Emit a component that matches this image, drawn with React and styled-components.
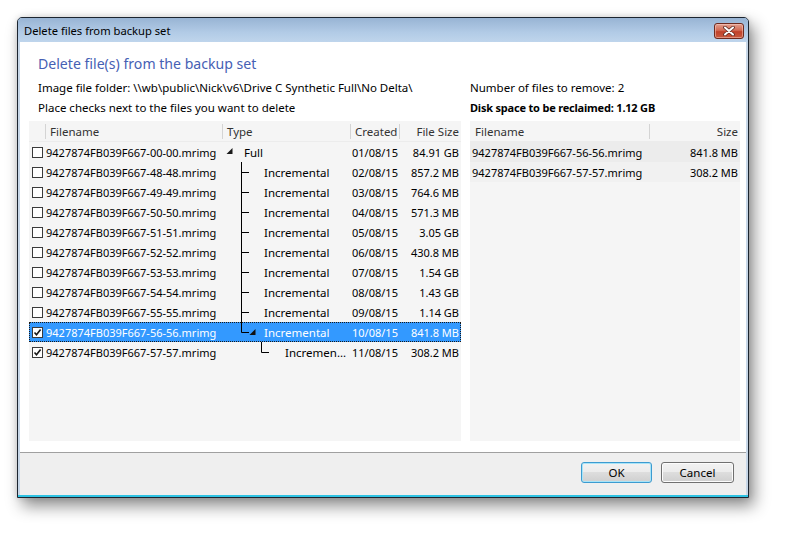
import React from "react";
import styled, { createGlobalStyle } from "styled-components";

const files = [
  { name: "9427874FB039F667-00-00.mrimg", type: "Full", created: "01/08/15", size: "84.91 GB", tree: "root" },
  { name: "9427874FB039F667-48-48.mrimg", type: "Incremental", created: "02/08/15", size: "857.2 MB", tree: "child" },
  { name: "9427874FB039F667-49-49.mrimg", type: "Incremental", created: "03/08/15", size: "764.6 MB", tree: "child" },
  { name: "9427874FB039F667-50-50.mrimg", type: "Incremental", created: "04/08/15", size: "571.3 MB", tree: "child" },
  { name: "9427874FB039F667-51-51.mrimg", type: "Incremental", created: "05/08/15", size: "3.05 GB", tree: "child" },
  { name: "9427874FB039F667-52-52.mrimg", type: "Incremental", created: "06/08/15", size: "430.8 MB", tree: "child" },
  { name: "9427874FB039F667-53-53.mrimg", type: "Incremental", created: "07/08/15", size: "1.54 GB", tree: "child" },
  { name: "9427874FB039F667-54-54.mrimg", type: "Incremental", created: "08/08/15", size: "1.43 GB", tree: "child" },
  { name: "9427874FB039F667-55-55.mrimg", type: "Incremental", created: "09/08/15", size: "1.14 GB", tree: "child" },
  { name: "9427874FB039F667-56-56.mrimg", type: "Incremental", created: "10/08/15", size: "841.8 MB", tree: "lastOpen", checked: true, selected: true },
  { name: "9427874FB039F667-57-57.mrimg", type: "Incremen...", created: "11/08/15", size: "308.2 MB", tree: "grand", checked: true },
];

const removed = [
  { name: "9427874FB039F667-56-56.mrimg", size: "841.8 MB" },
  { name: "9427874FB039F667-57-57.mrimg", size: "308.2 MB" },
];

const GlobalStyle = createGlobalStyle`
  html, body {
    margin: 0;
    padding: 0;
    background: #ffffff;
  }
  body {
    font-family: "Noto Sans", "Open Sans", sans-serif;
    font-size: 11.5px;
    color: #000;
  }
`;

const TreeGlyph = ({ tree }) => {
  const widths = { root: 22, child: 42, lastOpen: 42, grand: 63 };
  return (
    <svg width={widths[tree]} height="20" style={{ flexShrink: 0 }}>
      {tree === "root" && <polygon points="10.5,6 10.5,12 4.5,12" fill="#1a1a1a" />}
      {tree === "child" && (
        <path d="M19.5 0 V20 M19.5 10.5 H27" stroke="#000" strokeWidth="1" fill="none" />
      )}
      {tree === "lastOpen" && (
        <>
          <path d="M19.5 0 V10.5 H27" stroke="#000" strokeWidth="1" fill="none" />
          <polygon points="33.5,7 33.5,13 27.5,13" fill="#111" />
        </>
      )}
      {tree === "grand" && <path d="M39.5 0 V10.5 H47" stroke="#000" strokeWidth="1" fill="none" />}
    </svg>
  );
};

const CheckBox = ({ checked }) => (
  <Box>
    {checked && (
      <svg width="9" height="9" viewBox="0 0 9 9">
        <path d="M1.5 4.5 L3.5 6.8 L7.6 1.6" stroke="#1a1a1a" strokeWidth="1.6" fill="none" />
      </svg>
    )}
  </Box>
);

const App = () => {
  return (
    <Page>
      <GlobalStyle />
      <Window>
        <TitleBar>
          <TitleText>Delete files from backup set</TitleText>
          <CloseButton>
            <svg width="14" height="10" viewBox="0 0 14 10">
              <path d="M3 1.5 L11 8.5 M11 1.5 L3 8.5" stroke="#5a2a22" strokeWidth="3.6" strokeLinecap="round" />
              <path d="M3 1.5 L11 8.5 M11 1.5 L3 8.5" stroke="#ffffff" strokeWidth="2" strokeLinecap="round" />
            </svg>
          </CloseButton>
        </TitleBar>
        <Client>
          <Main>
            <Heading>Delete file(s) from the backup set</Heading>
            <InfoLine $indent>Image file folder: \\wb\public\Nick\v6\Drive C Synthetic Full\No Delta\</InfoLine>
            <InfoLine>Number of files to remove: 2</InfoLine>
            <InfoLine $indent>Place checks next to the files you want to delete</InfoLine>
            <InfoLine $bold>Disk space to be reclaimed: 1.12 GB</InfoLine>

            <ListPanel>
              <HeaderRow $cols="16px 177px 128px 49px 62px">
                <HeadCell />
                <HeadCell $sep>Filename</HeadCell>
                <HeadCell $sep>Type</HeadCell>
                <HeadCell $sep>Created</HeadCell>
                <HeadCell $sep $right>File Size</HeadCell>
              </HeaderRow>
              {files.map((f) => (
                <FileRow key={f.name} $selected={f.selected}>
                  <NameCell>
                    <CheckBox checked={f.checked} />
                    <span>{f.name}</span>
                  </NameCell>
                  <TypeCell>
                    <TreeGlyph tree={f.tree} />
                    <span>{f.type}</span>
                  </TypeCell>
                  <Cell $pad="0 0 0 2px">{f.created}</Cell>
                  <Cell $right $pad="0 2px 0 0">{f.size}</Cell>
                </FileRow>
              ))}
            </ListPanel>

            <ListPanel>
              <HeaderRow $cols="179px 91px">
                <HeadCell $pad="0 0 0 5px">Filename</HeadCell>
                <HeadCell $sep $right>Size</HeadCell>
              </HeaderRow>
              {removed.map((r, i) => (
                <RemovedRow key={r.name} $shade={i === 0 ? "#ececec" : "#f1f1f1"}>
                  <Cell $pad="0 0 0 2px">{r.name}</Cell>
                  <Cell $right $pad="0 2px 0 0">{r.size}</Cell>
                </RemovedRow>
              ))}
            </ListPanel>
          </Main>
          <Footer>
            <Button $default>OK</Button>
            <Button>Cancel</Button>
          </Footer>
        </Client>
      </Window>
    </Page>
  );
};

export default App;

const Page = styled.div`
  padding: 17px 0 0 17px;
  width: 797px;
  height: 546px;
  box-sizing: border-box;
  background: #ffffff;
`;

const Window = styled.div`
  width: 732px;
  height: 481px;
  box-sizing: border-box;
  border: 1px solid #1c2530;
  border-radius: 5px 5px 0 0;
  background: #c7d7e8;
  padding: 0 2px 2px 2px;
  display: flex;
  flex-direction: column;
  box-shadow: 5px 8px 16px rgba(0, 0, 0, 0.45), 0 0 6px rgba(0, 0, 0, 0.12),
    inset 0 -2px 0 #2ec3e3;
`;

const TitleBar = styled.div`
  height: 24px;
  margin: 0 -2px;
  padding: 0 4px 0 6px;
  display: flex;
  align-items: center;
  justify-content: space-between;
  border-radius: 4px 4px 0 0;
  background: linear-gradient(#98b4d4, #b2cbe6 60%, #bfd5ec);
`;

const TitleText = styled.div`
  font-size: 11.2px;
  color: #000;
  padding-top: 1px;
`;

const CloseButton = styled.div`
  width: 30px;
  height: 16px;
  box-sizing: border-box;
  margin-top: 2px;
  border: 1px solid #6e2a1f;
  border-radius: 3px;
  display: flex;
  align-items: center;
  justify-content: center;
  background: linear-gradient(#e3a090, #d36a53 45%, #c0412a 55%, #c95a3f);
  box-shadow: inset 0 0 0 1px rgba(255, 220, 210, 0.45);
`;

const Client = styled.div`
  flex: 1;
  background: #ffffff;
  display: flex;
  flex-direction: column;
`;

const Main = styled.div`
  flex: 1;
  padding: 12px 5px 0 9px;
  display: grid;
  grid-template-columns: 432px 270px;
  grid-template-rows: 24px 20px 20px 323px;
  column-gap: 9px;
  align-content: start;
`;

const Heading = styled.div`
  grid-column: 1 / span 2;
  padding-left: 9px;
  font-size: 14.1px;
  line-height: 20px;
  color: #4660b4;
`;

const InfoLine = styled.div`
  padding-left: ${(p) => (p.$indent ? "9px" : "0")};
  line-height: 20px;
  font-size: ${(p) => (p.$bold ? "11px" : "11.5px")};
  letter-spacing: ${(p) => (p.$bold ? "-0.2px" : "0")};
  font-weight: ${(p) => (p.$bold ? 700 : 400)};
  white-space: nowrap;
`;

const ListPanel = styled.div`
  background: #f5f5f5;
  margin-top: 3px;
  height: 320px;
  overflow: hidden;
`;

const HeaderRow = styled.div`
  height: 21px;
  display: grid;
  grid-template-columns: ${(p) => p.$cols};
  color: #333;
  border-bottom: 1px solid #ececec;
  box-sizing: border-box;
`;

const HeadCell = styled.div`
  display: flex;
  align-items: center;
  justify-content: ${(p) => (p.$right ? "flex-end" : "flex-start")};
  padding: ${(p) => p.$pad || (p.$right ? "0 2px 0 0" : "0 0 0 4px")};
  border-left: ${(p) => (p.$sep ? "1px solid #d4d4d4" : "none")};
  margin: 3px 0 2px;
  white-space: nowrap;
`;

const FileRow = styled.div`
  height: 20px;
  box-sizing: border-box;
  display: grid;
  grid-template-columns: 193px 128px 49px 62px;
  align-items: center;
  background: ${(p) => (p.$selected ? "#3399ff" : "transparent")};
  color: ${(p) => (p.$selected ? "#ffffff" : "#000000")};
  outline: ${(p) => (p.$selected ? "1px dotted #1a1a1a" : "none")};
  outline-offset: -1px;
`;

const RemovedRow = styled.div`
  height: 20px;
  display: grid;
  grid-template-columns: 179px 91px;
  align-items: center;
  background: ${(p) => p.$shade};
`;

const NameCell = styled.div`
  display: flex;
  align-items: center;
  gap: 3px;
  padding-left: 3px;
  font-size: 11px;
  white-space: nowrap;
`;

const TypeCell = styled.div`
  display: flex;
  align-items: center;
  height: 20px;
  white-space: nowrap;
  overflow: hidden;
`;

const Cell = styled.div`
  padding: ${(p) => p.$pad || "0"};
  text-align: ${(p) => (p.$right ? "right" : "left")};
  font-size: 11px;
  white-space: nowrap;
`;

const Box = styled.span`
  width: 11px;
  height: 11px;
  box-sizing: border-box;
  border: 1px solid #3a3a3a;
  background: #ffffff;
  display: inline-flex;
  align-items: center;
  justify-content: center;
  flex-shrink: 0;
`;

const Footer = styled.div`
  height: 43px;
  box-sizing: border-box;
  border-top: 1px solid #a0a0a0;
  background: #efefef;
  display: flex;
  justify-content: flex-end;
  align-items: flex-start;
  gap: 9px;
  padding: 9px 12px 0 0;
`;

const Button = styled.div`
  width: ${(p) => (p.$default ? "71px" : "73px")};
  height: 21px;
  box-sizing: border-box;
  border: 1px solid ${(p) => (p.$default ? "#3c9bd0" : "#707070")};
  border-radius: 3px;
  display: flex;
  align-items: center;
  justify-content: center;
  color: #000;
  background: linear-gradient(#f2f2f2, #ebebeb 50%, #dddddd 50%, #cfcfcf);
  box-shadow: ${(p) =>
    p.$default ? "inset 0 0 0 1px #a8e4f8" : "inset 0 0 0 1px #fcfcfc"};
`;
